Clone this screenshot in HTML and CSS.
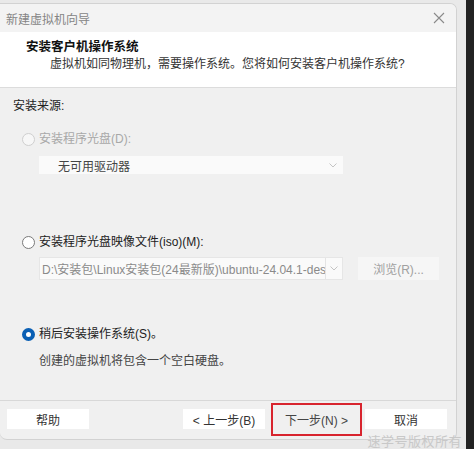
FILE: index.html
```html
<!DOCTYPE html>
<html lang="zh-CN">
<head>
    <meta charset="UTF-8">
    <meta name="viewport" content="width=device-width, initial-scale=1.0">
    <title>新建虚拟机向导</title>
    <link rel="stylesheet" href="styles.css">
</head>
<body>
    <div class="screen">
        <div class="desk">
            <div class="window">
                <div class="titlebar">
                    <span class="title">新建虚拟机向导</span>
                    <svg class="close" width="12" height="12" viewBox="0 0 12 12">
                        <path d="M1 1L11 11M11 1L1 11" stroke="#8a8a8a" stroke-width="1.1" fill="none"/>
                    </svg>
                </div>

                <div class="header">
                    <h1>安装客户机操作系统</h1>
                    <p>虚拟机如同物理机，需要操作系统。您将如何安装客户机操作系统?</p>
                </div>

                <div class="content">
                    <div class="label">安装来源:</div>

                    <div class="option disabled">
                        <span class="radio"></span>
                        <span>安装程序光盘(D):</span>
                    </div>
                    <div class="row">
                        <div class="select select-drive">
                            <span class="select-text">无可用驱动器</span>
                            <svg class="chevron" width="8" height="5" viewBox="0 0 8 5">
                                <path d="M0.5 0.5L4 4L7.5 0.5" stroke="#c4c4c4" fill="none"/>
                            </svg>
                        </div>
                    </div>

                    <div class="option option-iso">
                        <span class="radio"></span>
                        <span>安装程序光盘映像文件(iso)(M):</span>
                    </div>
                    <div class="row">
                        <div class="select select-iso">
                            <span class="select-text">D:\安装包\Linux安装包(24最新版)\ubuntu-24.04.1-des</span>
                            <span class="select-arrow">
                                <svg width="8" height="5" viewBox="0 0 8 5">
                                    <path d="M0.5 0.5L4 4L7.5 0.5" stroke="#c4c4c4" fill="none"/>
                                </svg>
                            </span>
                        </div>
                        <div class="browse">浏览(R)...</div>
                    </div>

                    <div class="option option-later">
                        <span class="radio checked"></span>
                        <span>稍后安装操作系统(S)。</span>
                    </div>
                    <p class="note">创建的虚拟机将包含一个空白硬盘。</p>
                </div>

                <div class="footer">
                    <div class="btn">帮助</div>
                    <div class="nav">
                        <div class="btn">&lt; 上一步(B)</div>
                        <div class="btn btn-next">下一步(N) &gt;</div>
                        <div class="btn">取消</div>
                    </div>
                </div>
            </div>
            <div class="watermark">速学号版权所有</div>
        </div>
        <div class="dark"></div>
    </div>
</body>
</html>
```

FILE: styles.css
```css
body {
    margin: 0;
    font-family: "Liberation Sans", "Noto Sans CJK SC", sans-serif;
    font-size: 12px;
    color: #222;
}
.screen {
    display: flex;
    height: 449px;
    overflow: hidden;
}
.desk {
    position: relative;
    width: 466px;
    background: #e9e9e9;
    padding-top: 3px;
    box-sizing: border-box;
}
.dark {
    flex: 1;
    background: #222;
}
.window {
    width: 457px;
    height: 437px;
    box-sizing: border-box;
    border: 1px solid #d2d2d2;
    border-left: none;
    border-radius: 0 7px 7px 7px;
    background: #f0f0f0;
    overflow: hidden;
    display: flex;
    flex-direction: column;
}
.titlebar {
    height: 28px;
    flex-shrink: 0;
    display: flex;
    align-items: center;
    justify-content: space-between;
    padding: 0 11px 0 6px;
    background: #f3f3f3;
}
.title {
    color: #858585;
    font-size: 12px;
}
.header {
    height: 56px;
    flex-shrink: 0;
    background: #fff;
    border-bottom: 1px solid #dcdcdc;
    padding: 7px 0 0 26px;
    box-sizing: border-box;
}
.header h1 {
    margin: 0;
    font-size: 12.5px;
    font-weight: bold;
    line-height: 16px;
    color: #111;
}
.header p {
    margin: 1px 0 0 24px;
    font-size: 12px;
    line-height: 17px;
    color: #333;
}
.content {
    flex: 1;
    padding: 9px 0 0 13px;
    border-bottom: 1px solid #d8d8d8;
}
.label {
    line-height: 18px;
}
.option {
    display: flex;
    align-items: center;
    gap: 4px;
    margin: 15px 0 0 9px;
    line-height: 18px;
}
.option.disabled {
    color: #a8a8a8;
}
.option-iso {
    margin-top: 59px;
}
.option-later {
    margin-top: 45px;
}
.radio {
    width: 11px;
    height: 11px;
    border: 1px solid #7a7a7a;
    border-radius: 50%;
    background: #fff;
    flex-shrink: 0;
}
.disabled .radio {
    border-color: #cfcfcf;
    background: #f7f7f7;
}
.radio.checked {
    width: 5px;
    height: 5px;
    border: 4px solid #0a5fb4;
    background: #fff;
}
.row {
    display: flex;
    gap: 15px;
    margin: 0 0 0 26px;
}
.select {
    display: flex;
    align-items: center;
    width: 304px;
    box-sizing: border-box;
    background: #fafafa;
    color: #555;
}
.select-drive {
    height: 18px;
    margin-top: 8px;
    padding: 0 6px 0 19px;
    justify-content: space-between;
    color: #444;
}
.select-iso {
    height: 23px;
    margin-top: 6px;
    padding-left: 2px;
    border: 1px solid #e6e6e6;
    color: #8a8a8a;
}
.select-text {
    flex: 1;
    white-space: nowrap;
    overflow: hidden;
}
.select-arrow {
    width: 16px;
    height: 100%;
    display: flex;
    align-items: center;
    justify-content: center;
    border-left: 1px solid #e4e4e4;
}
.browse {
    width: 81px;
    height: 23px;
    margin-top: 6px;
    display: flex;
    align-items: center;
    justify-content: center;
    background: #f6f6f6;
    color: #a0a0a0;
}
.note {
    margin: 9px 0 0 26px;
    line-height: 18px;
    color: #444;
}
.footer {
    height: 38px;
    flex-shrink: 0;
    display: flex;
    align-items: center;
    justify-content: space-between;
    padding: 0 9px 2px 7px;
    box-sizing: border-box;
}
.nav {
    display: flex;
    align-items: center;
}
.btn {
    width: 82px;
    height: 20px;
    display: flex;
    align-items: center;
    justify-content: center;
    background: #fff;
    color: #333;
}
.btn-next {
    width: 91px;
    height: 33px;
    margin: 0 3px 0 6px;
    box-sizing: border-box;
    border: 2px solid #d8242e;
    background: #f0f0f0;
    color: #444;
}
.watermark {
    position: absolute;
    right: 4px;
    bottom: 0;
    font-size: 13px;
    line-height: 15px;
    color: #c8c8c8;
    letter-spacing: 0.5px;
}
```
